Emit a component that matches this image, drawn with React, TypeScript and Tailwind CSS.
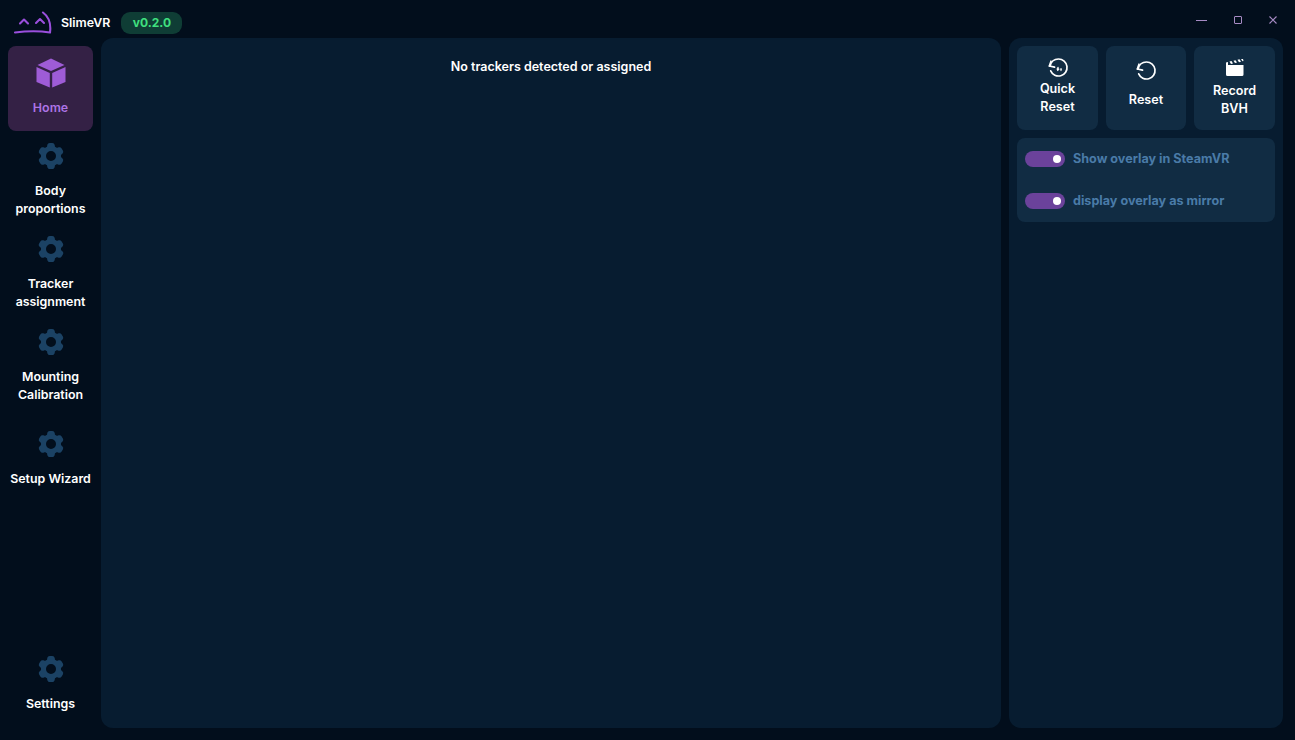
import { ReactNode } from "react";

const Gear = () => (
  <svg width="32" height="32" viewBox="0 0 24 24" fill="#1b4264" className="-my-0.5">
    <path
      fillRule="evenodd"
      clipRule="evenodd"
      d="M11.078 2.25c-.917 0-1.699.663-1.85 1.567L9.05 4.889c-.02.12-.115.26-.297.348a7.493 7.493 0 0 0-.986.57c-.166.115-.334.126-.45.083L6.3 5.508a1.875 1.875 0 0 0-2.282.819l-.922 1.597a1.875 1.875 0 0 0 .432 2.385l.84.692c.095.078.17.229.154.43a7.598 7.598 0 0 0 0 1.139c.015.2-.059.352-.153.43l-.841.692a1.875 1.875 0 0 0-.432 2.385l.922 1.597a1.875 1.875 0 0 0 2.282.818l1.019-.382c.115-.043.283-.031.45.082.312.214.641.405.985.57.182.088.277.228.297.35l.178 1.071c.151.904.933 1.567 1.85 1.567h1.844c.916 0 1.699-.663 1.85-1.567l.178-1.072c.02-.12.114-.26.297-.349.344-.165.673-.356.985-.57.167-.114.335-.125.45-.082l1.02.382a1.875 1.875 0 0 0 2.28-.819l.923-1.597a1.875 1.875 0 0 0-.432-2.385l-.84-.692c-.095-.078-.17-.229-.154-.43a7.614 7.614 0 0 0 0-1.139c-.016-.2.059-.352.153-.43l.84-.692c.708-.582.891-1.59.433-2.385l-.922-1.597a1.875 1.875 0 0 0-2.282-.818l-1.02.382c-.114.043-.282.031-.449-.083a7.49 7.49 0 0 0-.985-.57c-.183-.087-.277-.227-.297-.348l-.179-1.072a1.875 1.875 0 0 0-1.85-1.567h-1.843zM12 15.75a3.75 3.75 0 1 0 0-7.5 3.75 3.75 0 0 0 0 7.5z"
    />
  </svg>
);

const Cube = () => (
  <svg width="30" height="30" viewBox="0 0 30 30" fill="#9e5cd6">
    <path d="M15 0.5 28.5 7 15 13 1.5 7z" />
    <path d="M0.5 9 13.8 15v14.5L0.5 24z" />
    <path d="M29.5 9 16.2 15v14.5L29.5 24z" />
  </svg>
);

const NavItem = ({ label, active, icon }: { label: ReactNode; active?: boolean; icon: ReactNode }) => (
  <div
    className={`flex h-[85px] w-[85px] flex-col items-center justify-center rounded-lg pb-[3px] text-center text-[12.4px] font-semibold leading-[18px] ${
      active ? "gap-[11px] bg-[#342145] text-[#ad74e6]" : "gap-[12px] text-white"
    }`}
  >
    {icon}
    <div className="whitespace-nowrap">{label}</div>
  </div>
);

const ActionButton = ({ icon, children, className }: { icon: ReactNode; children: ReactNode; className: string }) => (
  <div className={`flex h-[84px] flex-col items-center justify-center rounded-lg bg-[#112c43] text-center text-[12.6px] font-semibold leading-[18px] text-white ${className}`}>
    {icon}
    <div>{children}</div>
  </div>
);

const Toggle = ({ label }: { label: string }) => (
  <div className="flex items-center gap-2">
    <div className="flex h-4 w-10 items-center justify-end rounded-full bg-[#6b429b] pr-1">
      <div className="h-2 w-2 rounded-full bg-white" />
    </div>
    <span className="text-[12.6px] font-bold text-[#4a7ba8]">{label}</span>
  </div>
);

const ResetArrow = ({ children }: { children?: ReactNode }) => (
  <svg width="22" height="21" viewBox="0 0 22 21" fill="none" stroke="white" strokeWidth="1.7" strokeLinecap="round" strokeLinejoin="round">
    <path d="M3 9C4 5 7 2 11.5 2a8.5 8.500 0 1 1-7.800 11.800" />
    <path d="M2.400 9 4 4.200" />
    <path d="M2.400 9 7.500 10.200" />
    {children}
  </svg>
);

export default function App() {
  return (
    <div
      className="flex h-[740px] w-[1295px] flex-col overflow-hidden bg-[#020e1c]"
      style={{ fontFamily: '"Inter", "Liberation Sans", sans-serif' }}
    >
      {/* title bar */}
      <div className="flex h-[38px] shrink-0 items-center pl-[14px] pr-[18px] pt-[8px]">
        <svg width="38" height="24" viewBox="0 0 38 24" fill="none" stroke="#9a4fdc" strokeWidth="2.1" strokeLinecap="round" strokeLinejoin="round" className="-mt-[2px]">
          <path d="M1 22.500C12 21 24 20.500 36 22.500 37 15 35 7 29 2.500" />
          <path d="M6 13.500 10 9.500 14 13.500" />
          <path d="M22 13 26 9 30 13" />
        </svg>
        <span className="ml-[9px] text-[12.4px] font-semibold text-white">SlimeVR</span>
        <span className="ml-[11px] flex h-[22px] w-[61px] items-center justify-center rounded-[9px] bg-[#0f3d35] text-[12px] font-bold text-[#3fe07f]">
          v0.2.0
        </span>
        <div className="ml-auto -mt-[6px] flex items-center gap-[27px]">
          <div className="h-[1px] w-[11px] bg-[#a78bc4]" />
          <div className="h-[8px] w-[8px] rounded-[1px] border border-[#a78bc4]" />
          <svg width="8" height="8" viewBox="0 0 8 8" stroke="#a78bc4" strokeWidth="1.1">
            <path d="M0.5 0.5 7.5 7.5M7.5 0.5 0.5 7.5" />
          </svg>
        </div>
      </div>

      <div className="flex min-h-0 flex-1 pb-3">
        {/* sidebar */}
        <div className="flex w-[101px] shrink-0 flex-col gap-2 pl-2 pt-2">
          <NavItem active label="Home" icon={<Cube />} />
          <NavItem label={<>Body<br />proportions</>} icon={<Gear />} />
          <NavItem label={<>Tracker<br />assignment</>} icon={<Gear />} />
          <NavItem label={<>Mounting<br />Calibration</>} icon={<Gear />} />
          <NavItem label="Setup Wizard" icon={<Gear />} />
          <div className="mt-auto">
            <NavItem label="Settings" icon={<Gear />} />
          </div>
        </div>

        {/* main panel */}
        <div className="flex w-[900px] shrink-0 justify-center rounded-xl bg-[#071c30] pt-[20px]">
          <p className="text-[12.5px] font-semibold leading-[18px] text-white">No trackers detected or assigned</p>
        </div>

        {/* right panel */}
        <div className="ml-2 flex w-[274px] shrink-0 flex-col gap-2 rounded-xl bg-[#071c30] p-2">
          <div className="flex gap-2">
            <ActionButton
              className="w-[81px] gap-[2px] pb-[4px]"
              icon={
                <ResetArrow>
                  <path d="M10.600 13.500c-1.200-1-.7-2.400.5-3.600.1 1 .9 1.300.9 2.400 0 .6-.5 1.200-1.400 1.200z" fill="white" strokeWidth="0.6" />
                  <path d="M14 13.500c-.9-.8-.5-1.600 0-2.300.6.7 1 1.500 0 2.300z" fill="white" strokeWidth="0.6" />
                </ResetArrow>
              }
            >
              Quick
              <br />
              Reset
            </ActionButton>
            <ActionButton className="w-[80px] gap-[10px] pb-[7px]" icon={<ResetArrow />}>
              Reset
            </ActionButton>
            <ActionButton
              className="w-[81px] gap-[5px]"
              icon={
                <svg width="20" height="18" viewBox="0 0 20 18" fill="white">
                  <path d="M1 3.500 3 3v3h15.500v9.500a1.500 1.500 0 0 1-1.500 1.500H2.500A1.500 1.500 0 0 1 1 15.500z" />
                  <path d="M4.500 2.600 6.500 2.100 8 4.500 6 5z" />
                  <path d="M8.500 1.700 10.500 1.200 12 3.600 10 4.100z" />
                  <path d="M12.500 0.800 14.500 0.300 16 2.700 14 3.200z" />
                  <path d="M16 0 18 0 18.500 2 17.500 2.300z" />
                </svg>
              }
            >
              Record
              <br />
              BVH
            </ActionButton>
          </div>
          <div className="flex h-[84px] flex-col justify-center gap-[23px] rounded-lg bg-[#112c43] px-2">
            <Toggle label="Show overlay in SteamVR" />
            <Toggle label="display overlay as mirror" />
          </div>
        </div>
      </div>
    </div>
  );
}
